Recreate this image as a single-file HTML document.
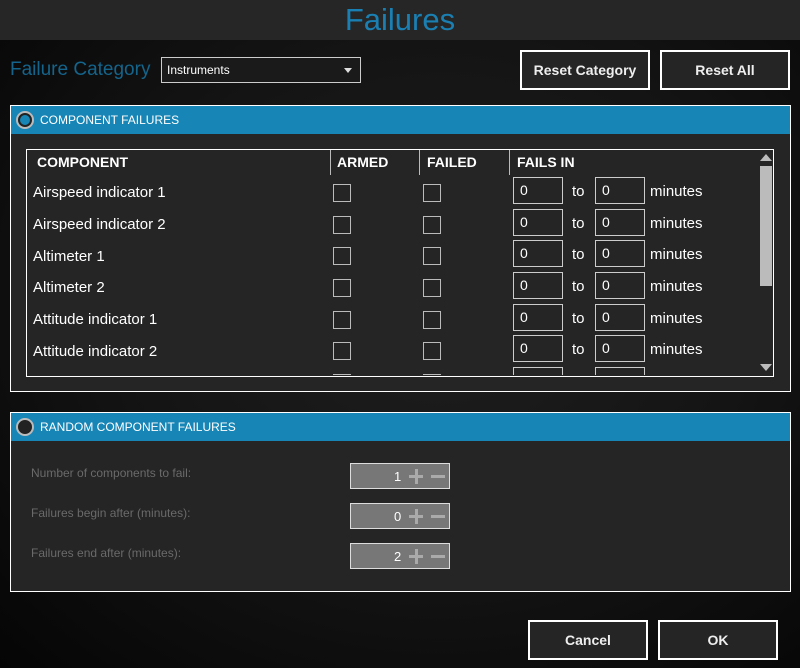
<!DOCTYPE html>
<html><head><meta charset="utf-8"><style>
*{box-sizing:border-box;margin:0;padding:0}
body{width:800px;height:668px;overflow:hidden;background:radial-gradient(ellipse at 55% 45%,#1f1f1f 0%,#141414 50%,#050505 100%);font-family:"Liberation Sans",sans-serif;color:#fff;position:relative}
.a{position:absolute}
.top{left:0;top:0;width:800px;height:40px;background:#262626}
.title{left:0;top:0;width:800px;text-align:center;font-size:31px;line-height:40px;color:#1a80b3}
.btn{position:absolute;border:2px solid #fff;background:#252525;font-size:14px;font-weight:bold;text-align:center;color:#eee}
.panel{position:absolute;left:10px;width:781px;border:1px solid #fff;background:#252525}
.hdr{height:28px;background:#1785b6;font-size:12px;line-height:28px;padding-left:29px;position:relative}
.rad{position:absolute;left:5px;top:5px;width:18px;height:18px;border-radius:50%;background:#222;border:2px solid #bbb}
.cb{position:absolute;width:18px;height:18px;border:1px solid #bbb}
.in{position:absolute;width:50px;height:27px;border:1px solid #ccc;font-size:14px;padding:4px 0 0 6px}
.t{position:absolute;font-size:15px}
.lbl{position:absolute;left:31px;font-size:12px;color:#6a6a6a}
.sp{position:absolute;left:350px;width:100px;height:26px;background:#777;border:1px solid #ddd;font-size:13px}
.ph{position:absolute;left:58px;top:11px;width:14px;height:3px;background:#aaa}
.pv{position:absolute;left:63.5px;top:5px;width:3px;height:15px;background:#aaa}
.mn{position:absolute;left:80px;top:11px;width:14px;height:3px;background:#aaa}
</style></head><body>
<div class="a top"></div>
<div class="a title">Failures</div>
<div class="a" style="left:10px;top:59px;font-size:19px;color:#14648c">Failure Category</div>
<div class="a" style="left:161px;top:57px;width:200px;height:26px;border:1px solid #ccc;background:#1a1a1a;font-size:12px;line-height:25px;padding-left:5px">Instruments<span style="position:absolute;right:8px;top:10px;border-left:4px solid transparent;border-right:4px solid transparent;border-top:5px solid #ddd"></span></div>
<div class="btn" style="left:520px;top:50px;width:130px;height:40px;line-height:36px">Reset Category</div>
<div class="btn" style="left:660px;top:50px;width:130px;height:40px;line-height:36px">Reset All</div>

<div class="panel" style="top:105px;height:287px">
<div class="hdr"><div class="rad"><div style="position:absolute;left:2px;top:2px;width:10px;height:10px;border-radius:50%;background:#1785b6"></div></div>COMPONENT FAILURES</div>
<div class="a" style="left:15px;top:43px;width:748px;height:228px;border:1px solid #fff;overflow:hidden">
<div class="t" style="left:10px;top:4px;font-weight:bold;font-size:14px">COMPONENT</div>
<div class="t" style="left:310px;top:4px;font-weight:bold;font-size:14px">ARMED</div>
<div class="t" style="left:400px;top:4px;font-weight:bold;font-size:14px">FAILED</div>
<div class="t" style="left:490px;top:4px;font-weight:bold;font-size:14px">FAILS IN</div>
<div class="a" style="left:303px;top:0;width:1px;height:25px;background:#bbb"></div>
<div class="a" style="left:392px;top:0;width:1px;height:25px;background:#bbb"></div>
<div class="a" style="left:482px;top:0;width:1px;height:25px;background:#bbb"></div>
<div class="a" style="left:733px;top:16px;width:12px;height:120px;background:#bbb"></div>
<div class="a" style="left:733px;top:4px;border-left:6px solid transparent;border-right:6px solid transparent;border-bottom:7px solid #bbb"></div>
<div class="a" style="left:733px;top:214px;border-left:6px solid transparent;border-right:6px solid transparent;border-top:7px solid #bbb"></div>
</div>
</div>

<div class="panel" style="top:412px;height:180px">
<div class="hdr"><div class="rad"></div>RANDOM COMPONENT FAILURES</div>
</div>
<div class="lbl" style="top:466px">Number of components to fail:</div>
<div class="lbl" style="top:506px">Failures begin after (minutes):</div>
<div class="lbl" style="top:546px">Failures end after (minutes):</div>
<div class="sp" style="top:463px"><span class="a" style="left:43px;top:5px">1</span><span class="ph"></span><span class="pv"></span><span class="mn"></span></div>
<div class="sp" style="top:503px"><span class="a" style="left:43px;top:5px">0</span><span class="ph"></span><span class="pv"></span><span class="mn"></span></div>
<div class="sp" style="top:543px"><span class="a" style="left:43px;top:5px">2</span><span class="ph"></span><span class="pv"></span><span class="mn"></span></div>

<div class="btn" style="left:528px;top:620px;width:120px;height:40px;line-height:36px">Cancel</div>
<div class="btn" style="left:658px;top:620px;width:120px;height:40px;line-height:36px">OK</div>

<div class="t" style="left:33px;top:184px">Airspeed indicator 1</div>
<div class="t" style="left:33px;top:216px">Airspeed indicator 2</div>
<div class="t" style="left:33px;top:248px">Altimeter 1</div>
<div class="t" style="left:33px;top:279px">Altimeter 2</div>
<div class="t" style="left:33px;top:311px">Attitude indicator 1</div>
<div class="t" style="left:33px;top:343px">Attitude indicator 2</div>

<div class="cb" style="left:333px;top:184px"></div><div class="cb" style="left:423px;top:184px"></div>
<div class="cb" style="left:333px;top:216px"></div><div class="cb" style="left:423px;top:216px"></div>
<div class="cb" style="left:333px;top:247px"></div><div class="cb" style="left:423px;top:247px"></div>
<div class="cb" style="left:333px;top:279px"></div><div class="cb" style="left:423px;top:279px"></div>
<div class="cb" style="left:333px;top:311px"></div><div class="cb" style="left:423px;top:311px"></div>
<div class="cb" style="left:333px;top:342px"></div><div class="cb" style="left:423px;top:342px"></div>

<div class="in" style="left:513px;top:177px">0</div><div class="t" style="left:572px;top:183px">to</div><div class="in" style="left:595px;top:177px">0</div><div class="t" style="left:650px;top:183px">minutes</div>
<div class="in" style="left:513px;top:209px">0</div><div class="t" style="left:572px;top:215px">to</div><div class="in" style="left:595px;top:209px">0</div><div class="t" style="left:650px;top:215px">minutes</div>
<div class="in" style="left:513px;top:240px">0</div><div class="t" style="left:572px;top:246px">to</div><div class="in" style="left:595px;top:240px">0</div><div class="t" style="left:650px;top:246px">minutes</div>
<div class="in" style="left:513px;top:272px">0</div><div class="t" style="left:572px;top:278px">to</div><div class="in" style="left:595px;top:272px">0</div><div class="t" style="left:650px;top:278px">minutes</div>
<div class="in" style="left:513px;top:304px">0</div><div class="t" style="left:572px;top:310px">to</div><div class="in" style="left:595px;top:304px">0</div><div class="t" style="left:650px;top:310px">minutes</div>
<div class="in" style="left:513px;top:335px">0</div><div class="t" style="left:572px;top:341px">to</div><div class="in" style="left:595px;top:335px">0</div><div class="t" style="left:650px;top:341px">minutes</div>
<div class="a" style="left:513px;top:367px;width:50px;height:8px;border:1px solid #ccc;border-bottom:none"></div>
<div class="a" style="left:595px;top:367px;width:50px;height:8px;border:1px solid #ccc;border-bottom:none"></div>
<div class="a" style="left:333px;top:374px;width:18px;height:1px;background:#bbb"></div>
<div class="a" style="left:423px;top:374px;width:18px;height:1px;background:#bbb"></div>
</body></html>
